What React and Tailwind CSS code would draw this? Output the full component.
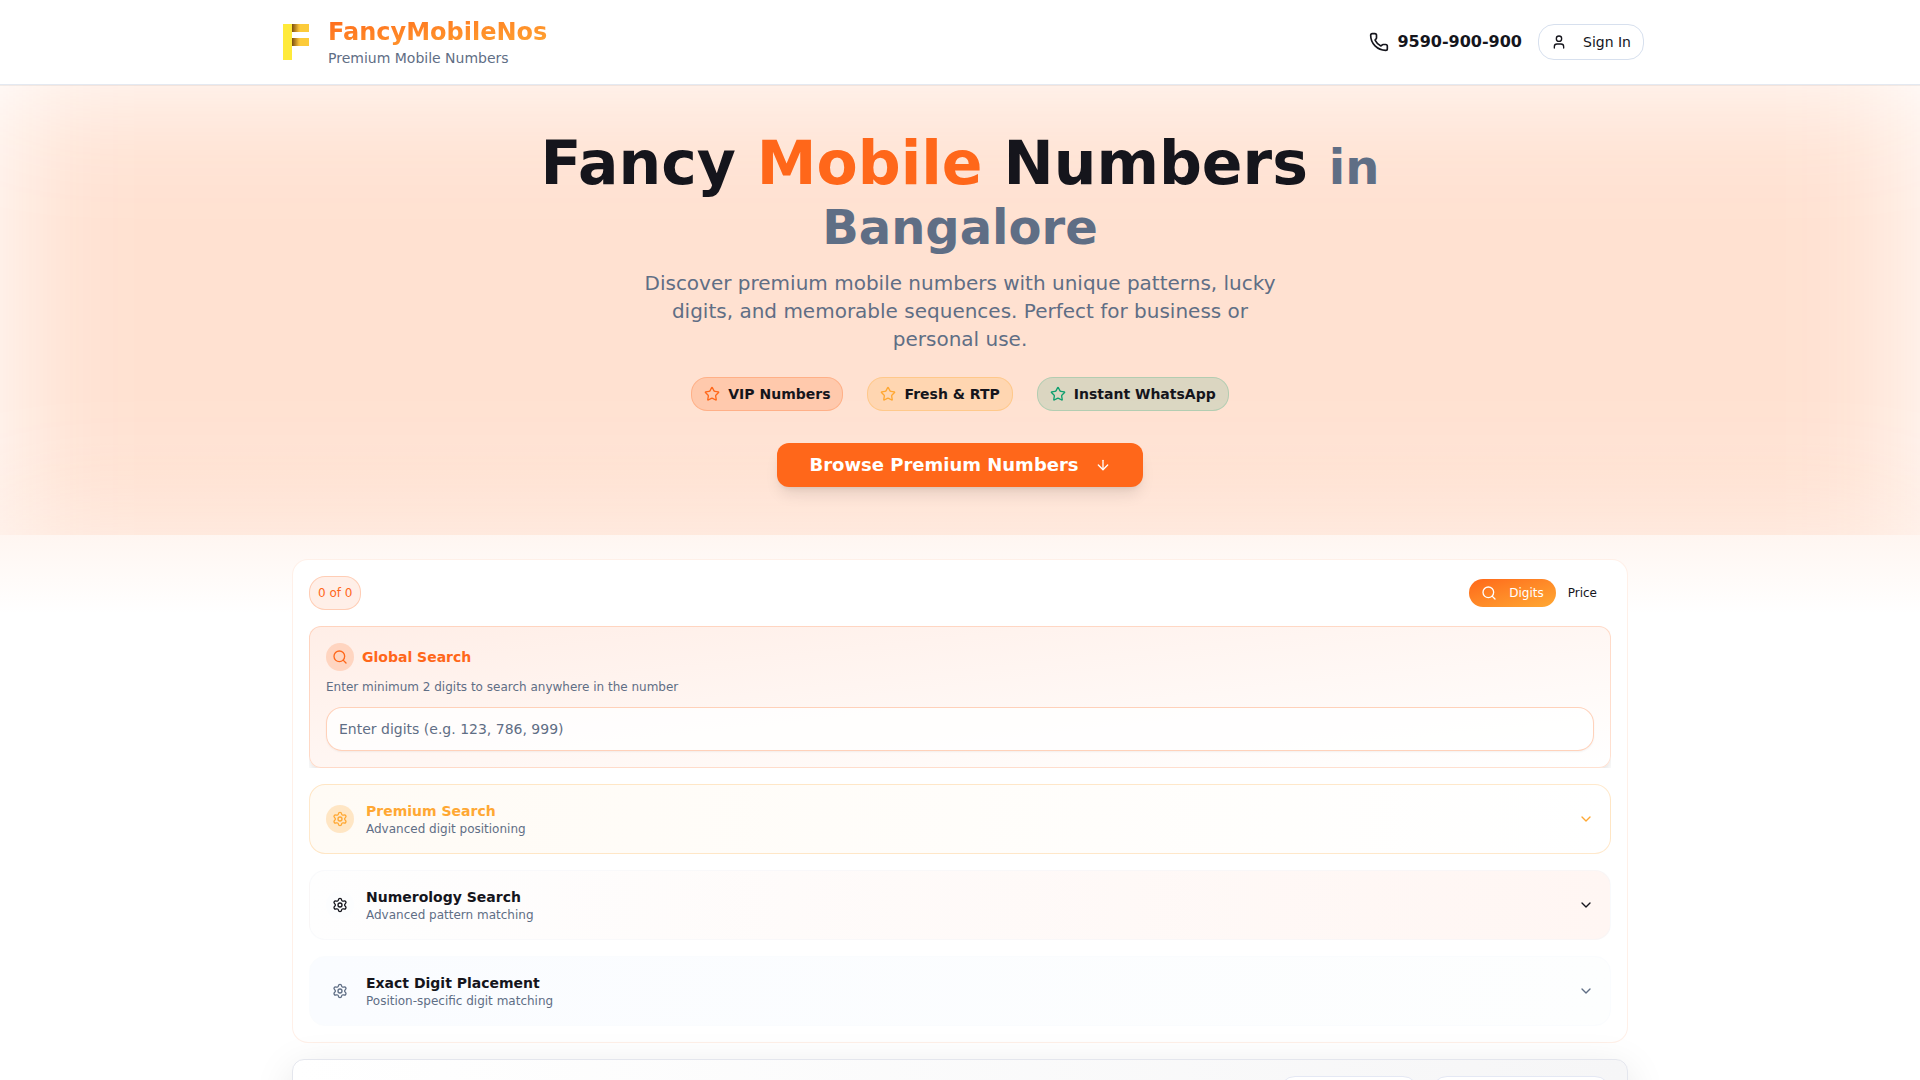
import { useState } from 'react'
import { ArrowDown, ChevronDown, Phone, Search, Settings, Star, User } from 'lucide-react'

const BADGES = [
    { label: 'VIP Numbers', box: 'bg-[#ff671a]/20 border-[#ff671a]/25', icon: 'text-[#ff671a]' },
    { label: 'Fresh & RTP', box: 'bg-[#ffa833]/20 border-[#ffa833]/30', icon: 'text-[#ffa833]' },
    { label: 'Instant WhatsApp', box: 'bg-[#109c6b]/15 border-[#16a374]/20', icon: 'text-[#0f9f6e]' },
]

const PANELS = [
    {
        title: 'Premium Search',
        text: 'Advanced digit positioning',
        box: 'border-[#ffa833]/25 bg-linear-to-r from-[#fffbf5] to-white',
        circle: 'bg-[#ffa833]/25',
        color: 'text-[#ffa833]',
        titleColor: 'text-[#ffa833]',
    },
    {
        title: 'Numerology Search',
        text: 'Advanced pattern matching',
        box: 'border-[#f4f6fa]/50 bg-linear-to-r from-[#fefefe] to-[#fff6f3]',
        circle: 'bg-[#fcfdfe]',
        color: 'text-[#15151c]',
        titleColor: 'text-[#15151c]',
    },
    {
        title: 'Exact Digit Placement',
        text: 'Position-specific digit matching',
        box: 'border-[#fafcfe] bg-linear-to-r from-[#fafcff] to-[#fdfefe]',
        circle: 'bg-[#fafcff]',
        color: 'text-[#5f6e85]',
        titleColor: 'text-[#15151c]',
    },
]

function Logo() {
    return (
        <svg width="40" height="40" viewBox="0 0 40 40" aria-hidden="true">
            <defs>
                <linearGradient id="bar" x1="0" x2="1" y1="0" y2="0">
                    <stop offset="0" stopColor="#7a4d10" />
                    <stop offset="0.4" stopColor="#f5bd35" />
                    <stop offset="0.5" stopColor="#fccb3a" />
                    <stop offset="1" stopColor="#fccb3a" />
                </linearGradient>
            </defs>
            <rect x="7" y="2" width="9" height="36" fill="#ffea3a" />
            <rect x="16" y="2" width="17" height="8" fill="url(#bar)" />
            <rect x="16" y="16" width="17" height="8" fill="url(#bar)" />
        </svg>
    )
}

function Header() {
    return (
        <header className="relative z-10 bg-white border-b border-[#e4e9f1] shadow-2xs">
            <div className="max-w-[1400px] mx-auto px-4 py-4 flex items-center justify-between">
                <a href="#" className="flex items-center gap-3">
                    <Logo />
                    <div>
                        <p className="w-fit text-2xl font-bold bg-linear-to-br from-[#ff671a] to-[#ffa833] bg-clip-text text-transparent">FancyMobileNos</p>
                        <p className="text-sm text-[#5f6e85]">Premium Mobile Numbers</p>
                    </div>
                </a>
                <div className="flex items-center gap-4">
                    <a href="tel:9590900900" className="flex items-center gap-2 font-bold">
                        <Phone size={20} /> 9590-900-900
                    </a>
                    <button className="h-9 px-3 flex items-center gap-4 rounded-2xl border border-[#d7e0ee] bg-white text-sm">
                        <User size={16} /> Sign In
                    </button>
                </div>
            </div>
        </header>
    )
}

function Hero() {
    return (
        <section className="relative overflow-hidden py-12 px-4 text-center">
            <div className="absolute inset-0 bg-[#ff671a]/20 blur-3xl" />
            <div className="absolute inset-x-0 bottom-0 h-24 bg-linear-to-b from-[#ff671a]/0 to-[#ff671a]/5" />
            <div className="relative max-w-4xl mx-auto flex flex-col items-center">
                <h1 className="text-6xl leading-none font-bold">
                    Fancy <span className="text-[#ff671a]">Mobile</span> Numbers{' '}
                    <span className="text-5xl leading-none text-[#5f6e85]">in</span>{' '}
                    <span className="text-5xl leading-none text-[#5f6e85]">Bangalore</span>
                </h1>
                <p className="mt-4 max-w-160 text-xl leading-7 text-[#5f6e85]">
                    Discover premium mobile numbers with unique patterns, lucky digits, and memorable sequences. Perfect for business or personal use.
                </p>
                <div className="mt-6 flex flex-wrap justify-center gap-6">
                    {BADGES.map(b => (
                        <div key={b.label} className={`flex items-center gap-2 px-3 py-1.5 rounded-2xl border text-sm font-semibold ${b.box}`}>
                            <Star size={16} className={b.icon} /> {b.label}
                        </div>
                    ))}
                </div>
                <button className="mt-8 h-11 px-8 flex items-center gap-4 rounded-xl bg-[#ff671a] text-white text-lg font-semibold shadow-lg">
                    Browse Premium Numbers <ArrowDown size={16} />
                </button>
            </div>
        </section>
    )
}

function GlobalSearch() {
    const [digits, setDigits] = useState('')

    return (
        <div className="overflow-hidden">
            <div className="rounded-xl border border-[#ff671a]/20 bg-linear-to-br from-[#ffeee7] to-white bg-origin-border p-4 shadow-lg">
                <div className="flex items-center gap-2">
                    <div className="size-7 flex items-center justify-center rounded-full bg-[#ff671a]/20 text-[#ff671a]">
                        <Search size={16} />
                    </div>
                    <label htmlFor="digits" className="text-sm font-semibold text-[#ff671a]">Global Search</label>
                </div>
                <p className="mt-2 text-xs text-[#5f6e85]">Enter minimum 2 digits to search anywhere in the number</p>
                <input id="digits" value={digits} onChange={e => setDigits(e.target.value)} placeholder="Enter digits (e.g. 123, 786, 999)"
                    className="mt-3 block w-full h-11 px-3 rounded-2xl border border-[#ff671a]/30 bg-white/80 text-sm outline-none shadow-xs placeholder:text-[#5f6e85]" />
            </div>
        </div>
    )
}

function SearchPanel({ panel }) {
    return (
        <button className={`w-full p-4 flex items-center gap-3 rounded-2xl border text-left ${panel.box}`}>
            <span className={`size-7 flex items-center justify-center rounded-full ${panel.circle} ${panel.color}`}>
                <Settings size={16} />
            </span>
            <span className="flex-1">
                <span className={`block text-sm font-semibold ${panel.titleColor}`}>{panel.title}</span>
                <span className="block text-xs text-[#5f6e85]">{panel.text}</span>
            </span>
            <ChevronDown size={16} className={panel.color} />
        </button>
    )
}

export default function App() {
    return (
        <div className="h-screen overflow-hidden bg-white font-['DejaVu_Sans',sans-serif] text-[#15151c]">
            <Header />
            <Hero />
            <div className="bg-linear-to-b from-[#ff671a]/6 to-[#ff671a]/0 to-[80px]">
                <main className="max-w-[1400px] mx-auto px-8 py-6 space-y-4">
                    <section className="rounded-2xl border border-[#ff671a]/10 bg-white p-4 space-y-4">
                        <div className="flex items-center justify-between">
                            <span className="px-2 py-2 rounded-2xl border border-[#ff671a]/25 bg-[#ff671a]/10 text-xs text-[#ff671a]">0 of 0</span>
                            <div className="flex items-center text-xs pr-0.5">
                                <button className="h-7 px-3 flex items-center gap-3 rounded-full bg-linear-to-br from-[#ff671a] to-[#ffa833] text-white">
                                    <Search size={16} /> Digits
                                </button>
                                <button className="h-7 px-3 rounded-full">Price</button>
                            </div>
                        </div>
                        <GlobalSearch />
                        {PANELS.map(p => <SearchPanel key={p.title} panel={p} />)}
                    </section>

                    <section className="rounded-xl border border-[#e4e6ed] bg-linear-to-r from-white to-[#f6f6f7] p-4 flex justify-end gap-3 shadow-[0_10px_40px_rgba(0,0,0,0.1)]">
                        <button className="h-9 w-35 rounded-2xl border border-[#e4e8f4] bg-white" aria-label="Sort" />
                        <button className="h-9 w-45 rounded-2xl border border-[#e4e8f4] bg-white" aria-label="View" />
                    </section>
                </main>
            </div>
        </div>
    )
}
